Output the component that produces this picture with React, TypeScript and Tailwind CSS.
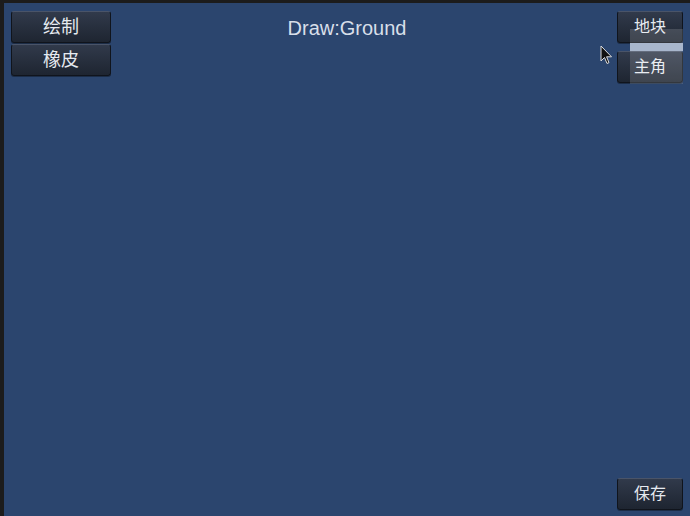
import React from "react";

const font = { fontFamily: '"Liberation Sans", "Noto Sans CJK SC", sans-serif' };

function Btn({ label, className = "" }: { label: string; className?: string }) {
  return (
    <div
      className={
        "flex items-center justify-center rounded-[3px] border border-[#10141c] border-t-[#4a5468] bg-gradient-to-b from-[#313a4b] to-[#1e2531] text-[#e6eaf0] shadow-[0_1px_0_rgba(0,0,0,0.35)] " +
        className
      }
    >
      {label}
    </div>
  );
}

export default function App() {
  return (
    <div className="h-[516px] w-[690px] bg-[#1c1c1c] pl-[4px] pt-[3px]" style={font}>
      <div className="relative flex h-full flex-col bg-[#2b456e] pl-[7px] pr-[7px] pt-[8px] pb-[6px]">
        <div className="grid grid-cols-[1fr_auto_1fr]">
          <div className="flex flex-col gap-px">
            <Btn label="绘制" className="h-[32px] w-[100px] text-[18px]" />
            <Btn label="橡皮" className="h-[32px] w-[100px] text-[18px]" />
          </div>
          <div className="pt-[2px] text-[20px] text-[#d8dfe9]">Draw:Ground</div>
          <div className="flex flex-col items-end gap-[8px]">
            <Btn label="地块" className="h-[32px] w-[66px] text-[16px]" />
            <Btn label="主角" className="h-[32px] w-[66px] text-[16px]" />
          </div>
        </div>
        <div className="mt-auto flex justify-end">
          <Btn label="保存" className="h-[32px] w-[66px] text-[16px]" />
        </div>

        {/* drag ghost over the right buttons */}
        <div className="absolute left-[626px] top-[26px] h-[55px] w-[53px] bg-white/15" />
        <div className="absolute left-[626px] top-[40px] h-[8px] w-[53px] bg-[#a8b6cc]" />

        {/* mouse cursor */}
        <svg className="absolute left-[596px] top-[42px]" width="13" height="20" viewBox="0 0 13 20">
          <path d="M1 1 L1 16 L4.5 12.5 L7 18.5 L9 17.6 L6.6 11.8 L11.5 11.8 Z" fill="#111" stroke="#ddd" strokeWidth="1" />
        </svg>
      </div>
    </div>
  );
}
